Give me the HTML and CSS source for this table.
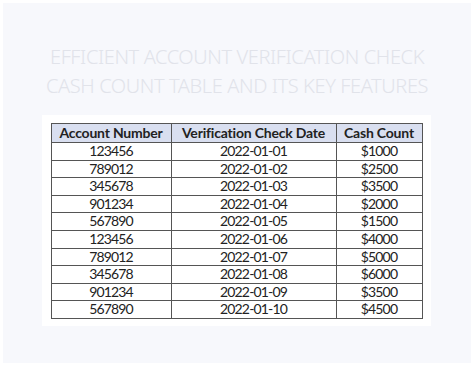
FILE: index.html
```html
<!DOCTYPE html>
<html>
<head>
<meta charset="utf-8">
<link rel="stylesheet" href="styles.css">
</head>
<body>
<div class="panel">
  <h1 class="title">EFFICIENT ACCOUNT VERIFICATION CHECK<br>CASH COUNT TABLE AND ITS KEY FEATURES</h1>
  <div class="card">
    <table class="sheet">
      <thead>
        <tr><th class="c1">Account Number</th><th class="c2">Verification Check Date</th><th class="c3">Cash Count</th></tr>
      </thead>
      <tbody>
        <tr><td>123456</td><td>2022-01-01</td><td>$1000</td></tr>
        <tr><td>789012</td><td>2022-01-02</td><td>$2500</td></tr>
        <tr><td>345678</td><td>2022-01-03</td><td>$3500</td></tr>
        <tr><td>901234</td><td>2022-01-04</td><td>$2000</td></tr>
        <tr><td>567890</td><td>2022-01-05</td><td>$1500</td></tr>
        <tr><td>123456</td><td>2022-01-06</td><td>$4000</td></tr>
        <tr><td>789012</td><td>2022-01-07</td><td>$5000</td></tr>
        <tr><td>345678</td><td>2022-01-08</td><td>$6000</td></tr>
        <tr><td>901234</td><td>2022-01-09</td><td>$3500</td></tr>
        <tr><td>567890</td><td>2022-01-10</td><td>$4500</td></tr>
      </tbody>
    </table>
  </div>
</div>
</body>
</html>
```
FILE: styles.css
```css
html, body {
  margin: 0;
  padding: 0;
  background: #ffffff;
}
body {
  padding: 3px;
  width: 474px;
  height: 366px;
  box-sizing: border-box;
  font-family: "Noto Sans", "Open Sans", sans-serif;
}
.panel {
  background: #f7f8fc;
  height: 360px;
  box-sizing: border-box;
  padding-top: 39px;
  display: flex;
  flex-direction: column;
  align-items: center;
}
.title {
  margin: 0;
  font-weight: 300;
  font-size: 20px;
  line-height: 29px;
  color: #e1e3ea;
  text-align: center;
  letter-spacing: -0.4px;
}
.card {
  margin-top: 15px;
  margin-left: -2px;
  width: 389px;
  background: #ffffff;
  box-sizing: border-box;
  padding: 8px 9px 7px 9px;
}
.sheet {
  border-collapse: collapse;
  width: 371px;
  table-layout: fixed;
  font-family: Lato, "Noto Sans", sans-serif;
  font-size: 14px;
  letter-spacing: -0.85px;
  color: #222;
}
.sheet th, .sheet td {
  border: 1px solid #555;
  text-align: center;
  padding: 0;
  line-height: 16.6px;
  white-space: nowrap;
}
.sheet th {
  background: #d9dff0;
  font-weight: 700;
  font-size: 14px;
  letter-spacing: -0.2px;
  height: 18px;
  line-height: 18px;
}
.c1 { width: 119px; }
.c2 { width: 164px; }
.c3 { width: 85px; }
```
